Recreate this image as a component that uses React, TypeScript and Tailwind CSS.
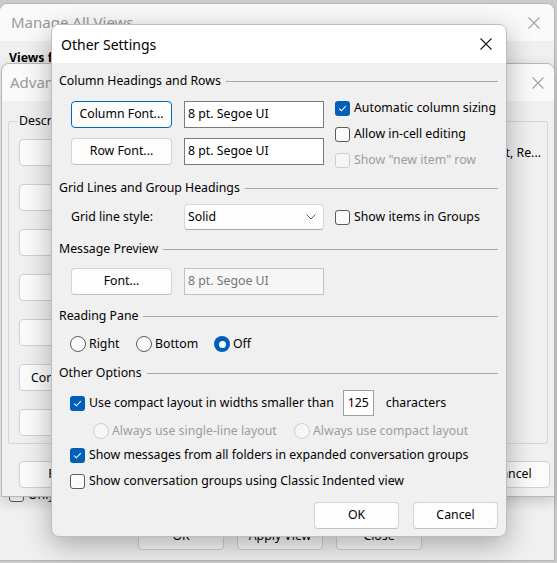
import React from "react";

function CloseX({ color = "#1a1a1a", size = 12 }: { color?: string; size?: number }) {
  return (
    <svg width={size} height={size} viewBox="0 0 12 12" fill="none">
      <path d="M0.5 0.5 L11.5 11.5 M11.5 0.5 L0.5 11.5" stroke={color} strokeWidth="1.1" />
    </svg>
  );
}

function Check({ label, checked = false, disabled = false }: { label: string; checked?: boolean; disabled?: boolean }) {
  return (
    <div className="flex items-center gap-[4px]">
      {checked ? (
        <span className="flex h-[15px] w-[15px] items-center justify-center rounded-[3px] bg-[#005fb8]">
          <svg width="11" height="11" viewBox="0 0 11 11" fill="none">
            <path d="M2.2 5.6 L4.4 7.8 L8.8 3.2" stroke="white" strokeWidth="1.1" />
          </svg>
        </span>
      ) : disabled ? (
        <span className="h-[15px] w-[15px] rounded-[3px] border border-[#cfcfcf] bg-[#f6f6f6]" />
      ) : (
        <span className="h-[15px] w-[15px] rounded-[3px] border border-[#5c5c5c] bg-[#fbfbfb]" />
      )}
      <span className={disabled ? "text-[#9d9d9d]" : "text-black"}>{label}</span>
    </div>
  );
}

function Radio({ label, selected = false, disabled = false }: { label: string; selected?: boolean; disabled?: boolean }) {
  return (
    <div className="flex items-center gap-[3px]">
      {selected ? (
        <span className="flex h-[16px] w-[16px] items-center justify-center rounded-full bg-[#005fb8]">
          <span className="h-[7px] w-[7px] rounded-full bg-white" />
        </span>
      ) : disabled ? (
        <span className="h-[16px] w-[16px] rounded-full border border-[#cfcfcf] bg-[#f6f6f6]" />
      ) : (
        <span className="h-[16px] w-[16px] rounded-full border border-[#5c5c5c] bg-[#fbfbfb]" />
      )}
      <span className={disabled ? "text-[#9d9d9d]" : "text-black"}>{label}</span>
    </div>
  );
}

function Header({ title }: { title: string }) {
  return (
    <div className="flex h-[20px] items-center gap-[5px] pr-[8px]">
      <span>{title}</span>
      <div className="h-px flex-1 bg-[#a8a8a8]" />
    </div>
  );
}

function Btn({ label, focused = false }: { label: string; focused?: boolean }) {
  return (
    <div
      className={
        focused
          ? "flex h-[27px] w-[101px] items-center justify-center rounded-[4px] border border-[#0067c0] bg-[#fdfdfd]"
          : "flex h-[27px] w-[101px] items-center justify-center rounded-[4px] border border-[#d3d3d3] border-b-[#c2c2c2] bg-[#fdfdfd]"
      }
    >
      {label}
    </div>
  );
}

function FieldBox({ value, disabled = false }: { value: string; disabled?: boolean }) {
  return (
    <div
      className={
        disabled
          ? "flex h-[27px] w-[140px] items-center border border-[#c2c2c2] bg-[#f7f7f7] px-[3px] text-[#767676]"
          : "flex h-[27px] w-[140px] items-center border border-[#7a7a7a] bg-white px-[3px]"
      }
    >
      {value}
    </div>
  );
}

function BgButton({ label, className }: { label: string; className: string }) {
  return (
    <div className={"flex h-[27px] items-center justify-center rounded-[4px] border border-[#d0d0d0] bg-[#fbfbfb] " + className}>
      {label}
    </div>
  );
}

export default function App() {
  const advRows = [
    { label: "Columns...", desc: "Importance, Reminder, Icon, From, Subject, Re..." },
    { label: "Group By...", desc: "" },
    { label: "Sort...", desc: "" },
    { label: "Filter...", desc: "" },
    { label: "Other Settings...", desc: "" },
    { label: "Conditional Formatting...", desc: "" },
    { label: "Format Columns...", desc: "" },
  ];

  return (
    <div className="relative h-[563px] w-[557px] overflow-hidden bg-[#cbcbcb] font-['Noto_Sans',sans-serif] text-[12.3px] text-black">
      {/* Manage All Views (background) */}
      <div className="absolute left-[-1px] top-[3px] flex h-[558px] w-[556px] flex-col rounded-t-[8px] border border-[#b5b5b5] bg-[#f0f0f0]">
        <div className="flex h-[37px] items-center justify-between rounded-t-[8px] bg-[#fafafa] pl-[11px] pr-[14px] text-[15px] text-[#9a9a9a]">
          <span>Manage All Views</span>
          <CloseX color="#a0a0a0" />
        </div>
        <div className="pl-[9px] pt-[8px] font-bold">Views for folder &quot;Inbox&quot;:</div>
        <div className="flex-1" />
        <div className="pl-[9px]">
          <Check label="Only show views created for this folder" />
        </div>
        <div className="flex gap-[13px] pb-[10px] pl-[138px] pt-[19px]">
          <BgButton label="OK" className="w-[86px]" />
          <BgButton label="Apply View" className="w-[86px]" />
          <BgButton label="Close" className="w-[86px]" />
        </div>
      </div>

      {/* Advanced View Settings (background) */}
      <div className="absolute left-[1px] top-[63px] flex h-[434px] w-[554px] flex-col rounded-t-[8px] border border-[#b8b8b8] bg-[#f0f0f0] shadow-[0_4px_14px_rgba(0,0,0,0.18)]">
        <div className="flex h-[37px] items-center justify-between rounded-t-[8px] bg-[#fafafa] pl-[8px] pr-[10px] text-[15px] text-[#9a9a9a]">
          <span>Advanced View Settings: Compact</span>
          <CloseX color="#a0a0a0" />
        </div>
        <fieldset className="mx-[6px] mt-[11px] h-[332px] rounded-[2px] border border-[#d6d6d6] px-[10px] pb-[10px] pt-[9px]">
          <legend className="ml-[-2px] px-[2px]">Description</legend>
          <div className="flex flex-col gap-[18px]">
            {advRows.map((r) => (
              <div key={r.label} className="flex items-center">
                <BgButton label={r.label} className="w-[168px] shrink-0" />
                <div className="-mr-[4px] flex-1 whitespace-nowrap text-right">{r.desc}</div>
              </div>
            ))}
          </div>
        </fieldset>
        <div className="flex justify-between pl-[17px] pr-[4px] pt-[17px]">
          <BgButton label="Reset Current View" className="w-[168px]" />
          <BgButton label="Cancel" className="w-[75px]" />
        </div>
      </div>

      {/* Other Settings (foreground) */}
      <div className="absolute left-[51px] top-[24px] flex h-[513px] w-[456px] flex-col overflow-hidden rounded-[8px] border border-[#bdbdbd] bg-[#f0f0f0] shadow-[0_8px_28px_rgba(0,0,0,0.3)]">
        <div className="flex h-[38px] shrink-0 items-center justify-between bg-white pl-[9px] pr-[14px]">
          <span className="text-[14px]">Other Settings</span>
          <CloseX />
        </div>

        <div className="flex flex-col pl-[7px] pt-[8px]">
          <Header title="Column Headings and Rows" />
          <div className="mt-[10px] flex pl-[12px]">
            <div className="flex flex-col gap-[10px]">
              <div className="flex gap-[12px]">
                <Btn label="Column Font..." focused />
                <FieldBox value="8 pt. Segoe UI" />
              </div>
              <div className="flex gap-[12px]">
                <Btn label="Row Font..." />
                <FieldBox value="8 pt. Segoe UI" />
              </div>
            </div>
            <div className="-mb-[8px] ml-[11px] mt-[-6px] flex flex-col">
              <div className="flex h-[26px] items-center"><Check label="Automatic column sizing" checked /></div>
              <div className="flex h-[26px] items-center"><Check label="Allow in-cell editing" /></div>
              <div className="flex h-[26px] items-center"><Check label={'Show "new item" row'} disabled /></div>
            </div>
          </div>

          <div className="mt-[13px]">
            <Header title="Grid Lines and Group Headings" />
          </div>
          <div className="mt-[6px] flex items-center pl-[12px]">
            <span className="w-[113px]">Grid line style:</span>
            <div className="flex h-[26px] w-[140px] items-center justify-between rounded-[4px] border border-[#d6d6d6] border-b-[#a8a8a8] bg-[#fdfdfd] pl-[3px] pr-[7px]">
              <span>Solid</span>
              <svg width="10" height="6" viewBox="0 0 10 6" fill="none">
                <path d="M0.5 0.5 L5 5 L9.5 0.5" stroke="#606060" strokeWidth="1" />
              </svg>
            </div>
            <div className="ml-[11px]"><Check label="Show items in Groups" /></div>
          </div>

          <div className="mt-[9px]">
            <Header title="Message Preview" />
          </div>
          <div className="mt-[9px] flex gap-[12px] pl-[12px]">
            <Btn label="Font..." />
            <FieldBox value="8 pt. Segoe UI" disabled />
          </div>

          <div className="mt-[11px]">
            <Header title="Reading Pane" />
          </div>
          <div className="mt-[8px] flex h-[20px] items-center pl-[11px]">
            <div className="w-[66px]"><Radio label="Right" /></div>
            <div className="w-[78px]"><Radio label="Bottom" /></div>
            <Radio label="Off" selected />
          </div>

          <div className="mt-[9px]">
            <Header title="Other Options" />
          </div>
          <div className="mt-[7px] flex h-[26px] items-center pl-[11px]">
            <Check label="Use compact layout in widths smaller than" checked />
            <div className="ml-[9px] flex h-[26px] w-[31px] items-center border border-[#a0a0a0] bg-white pl-[4px]">125</div>
            <span className="ml-[12px]">characters</span>
          </div>
          <div className="mt-[5px] flex h-[20px] items-center pl-[34px]">
            <div className="w-[201px]"><Radio label="Always use single-line layout" disabled /></div>
            <Radio label="Always use compact layout" disabled />
          </div>
          <div className="mt-[4px] flex h-[20px] items-center pl-[11px]">
            <Check label="Show messages from all folders in expanded conversation groups" checked />
          </div>
          <div className="mt-[6px] flex h-[20px] items-center pl-[11px]">
            <Check label="Show conversation groups using Classic Indented view" />
          </div>

          <div className="mt-[11px] flex justify-end gap-[14px] pr-[8px]">
            <div className="flex h-[27px] w-[85px] items-center justify-center rounded-[4px] border border-[#d3d3d3] border-b-[#c2c2c2] bg-[#fdfdfd]">OK</div>
            <div className="flex h-[27px] w-[85px] items-center justify-center rounded-[4px] border border-[#d3d3d3] border-b-[#c2c2c2] bg-[#fdfdfd]">Cancel</div>
          </div>
        </div>
      </div>
    </div>
  );
}
